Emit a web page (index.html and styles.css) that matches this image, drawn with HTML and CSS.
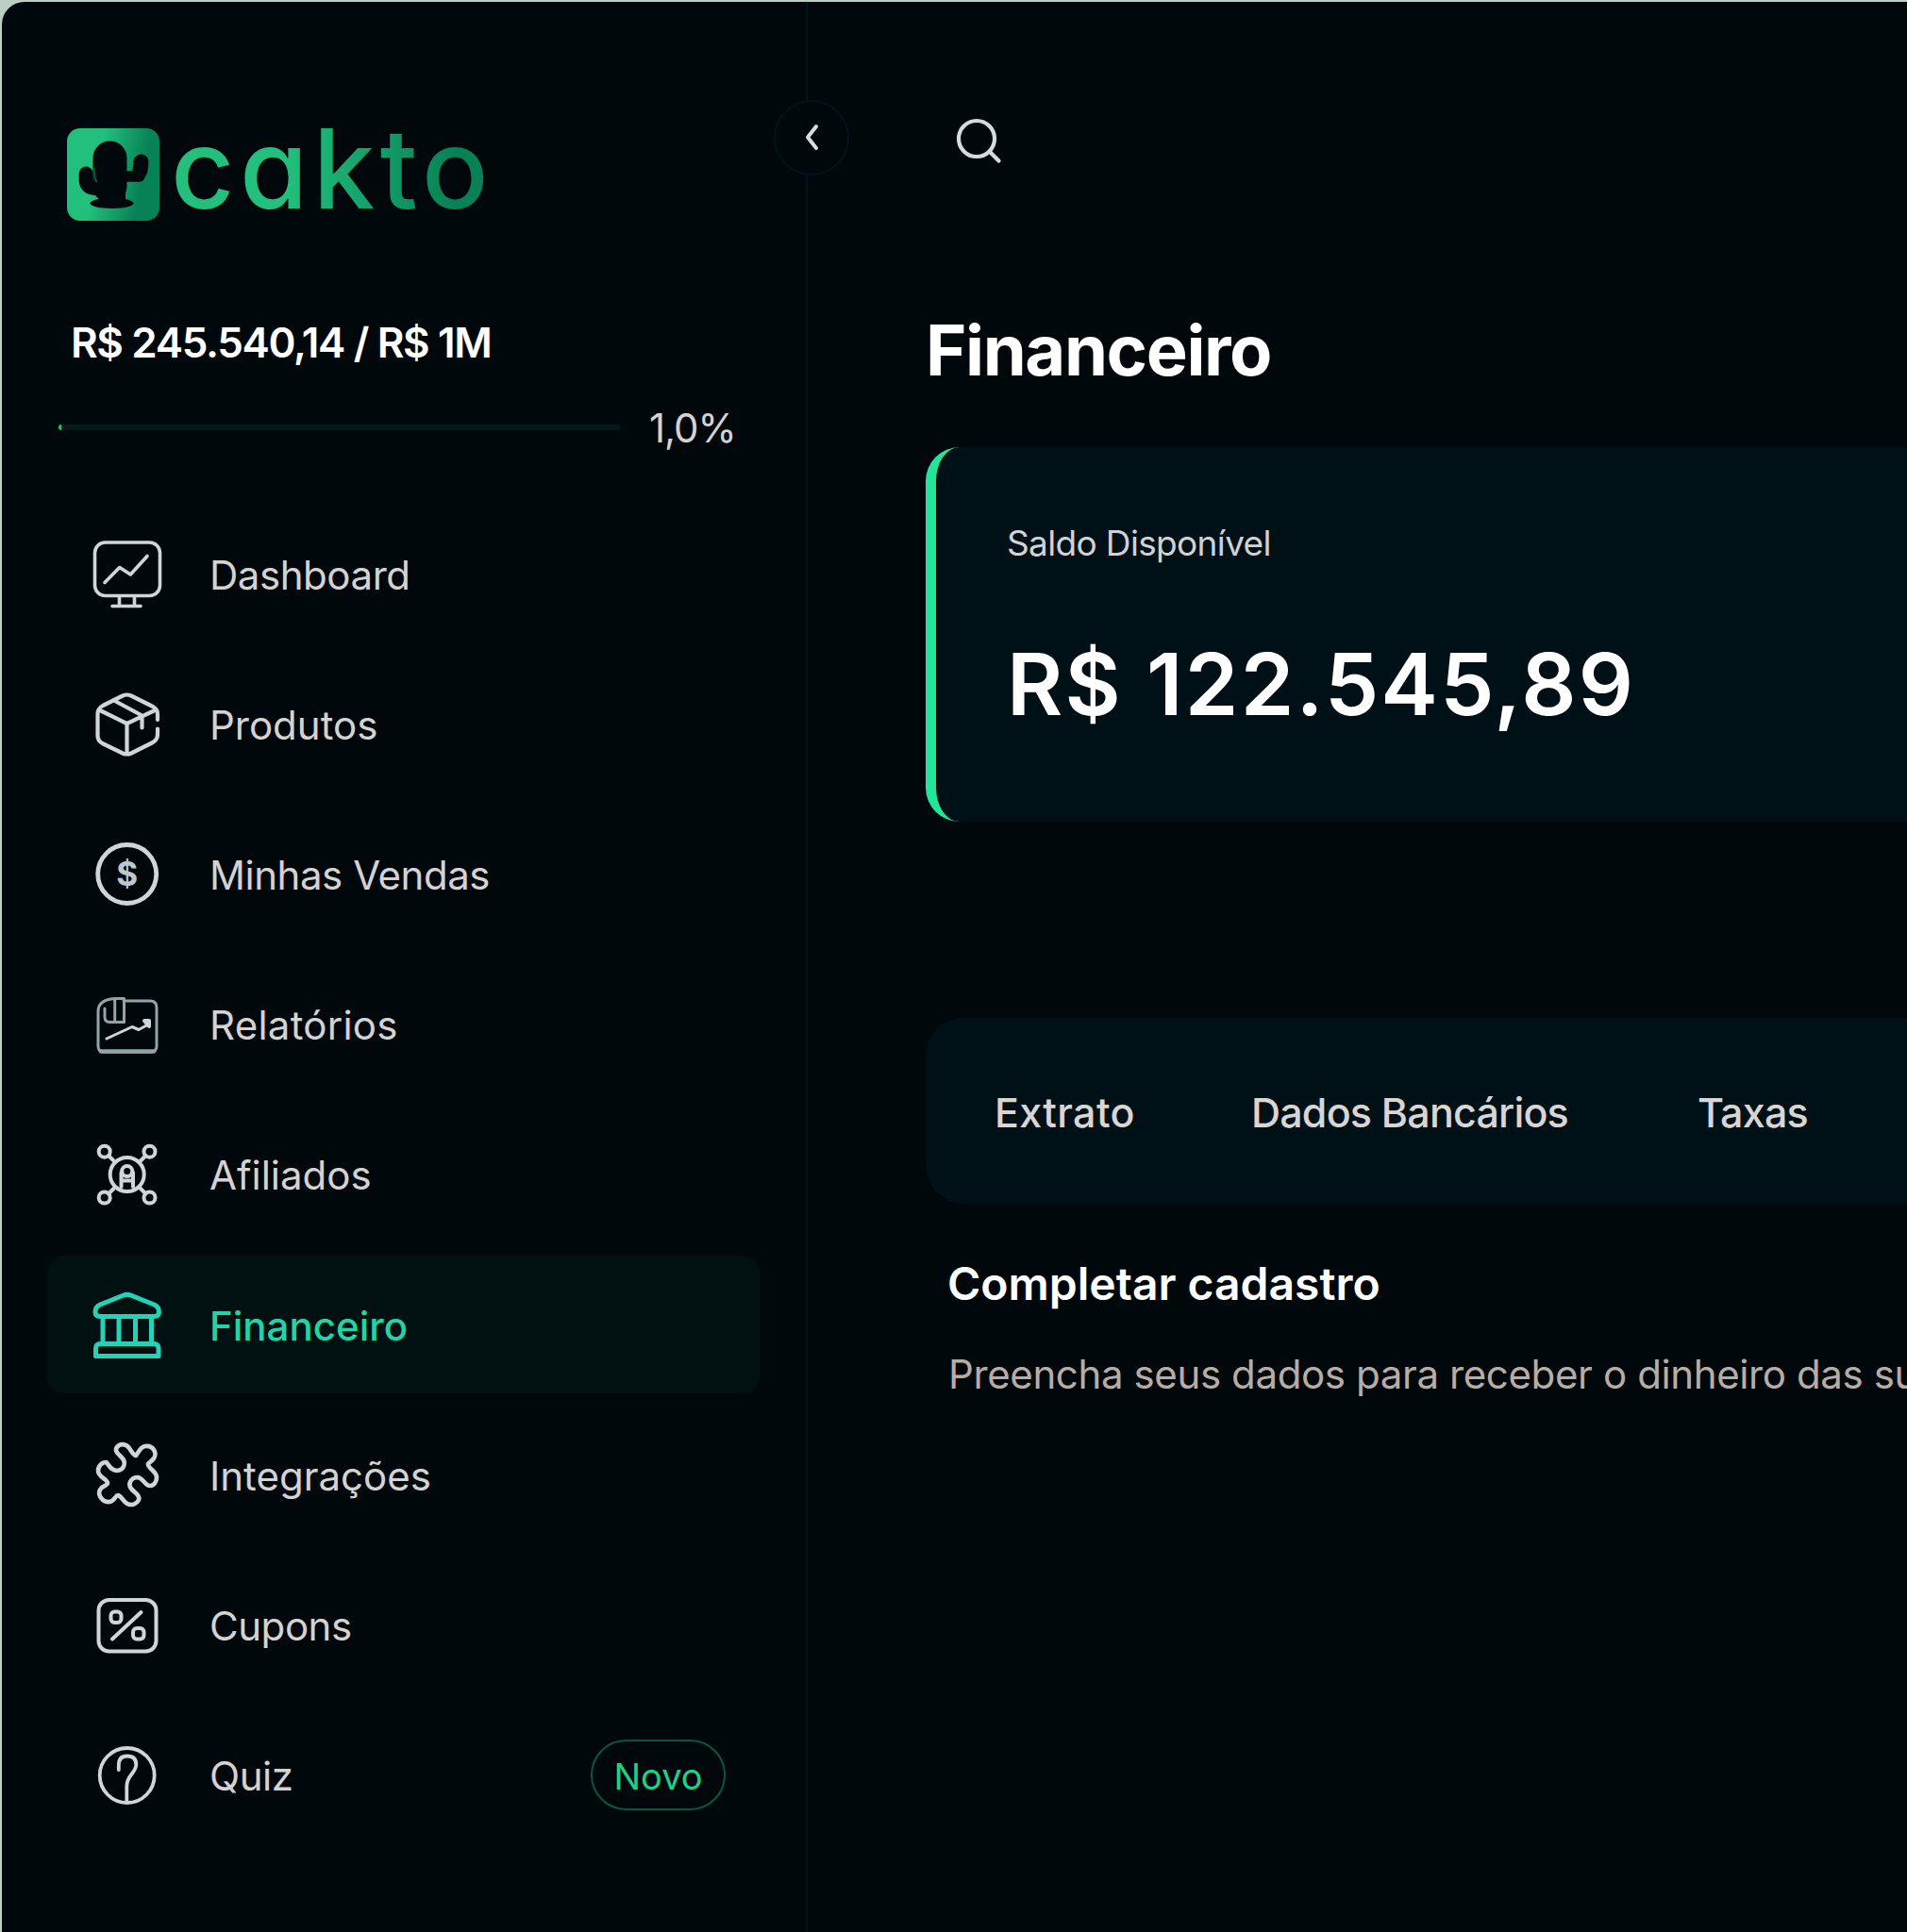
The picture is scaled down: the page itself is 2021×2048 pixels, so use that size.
FILE: index.html
```html
<!DOCTYPE html>
<html lang="pt-BR">
<head>
    <meta charset="utf-8">
    <title>Financeiro</title>
    <link rel="stylesheet" href="styles.css">
</head>
<body>
    <div class="app">
        <aside class="sidebar">
            <div class="logo">
                <svg class="logo-icon" viewBox="0 0 98 98">
                    <defs>
                        <linearGradient id="logoGrad" x1="0" y1="0.2" x2="1" y2="0.4">
                            <stop offset="0.35" stop-color="#22c07c"/>
                            <stop offset="0.85" stop-color="#078257"/>
                        </linearGradient>
                    </defs>
                    <rect width="98" height="98" rx="14" fill="url(#logoGrad)"/>
                    <g fill="#01080b">
                        <rect x="27.500" y="13.500" width="36" height="66" rx="18"/>
                        <path d="M30 60h32v16H35z"/>
                        <ellipse cx="47.500" cy="79.500" rx="23" ry="5.500"/>
                    </g>
                    <g fill="none" stroke="#01080b" stroke-linecap="round">
                        <path d="M20.200 48v7q0 9 12 8.500" stroke-width="15"/>
                        <path d="M78.500 35.500L77.500 45" stroke-width="16"/>
                        <path d="M77 51H62" stroke-width="11.500"/>
                    </g>
                    <path d="M28.500 42q0 10 3 15" fill="none" stroke="#0c5a40" stroke-width="2"/>
                </svg>
                <span class="logo-text">cakto</span>
            </div>

            <div class="goal">
                <div class="goal-value">R$ 245.540,14 / R$ 1M</div>
                <div class="goal-row">
                    <div class="goal-bar"><div class="goal-fill"></div></div>
                    <span class="goal-percent">1,0%</span>
                </div>
            </div>

            <nav class="menu">
                <a class="item">
                    <svg class="icon" viewBox="0 0 76 76" stroke-width="3.6">
                        <rect x="4.500" y="5" width="69" height="56.500" rx="11"/>
                        <path d="M15 47.500L30.700 31.500L42.300 39L60 19.500M30.500 62v10.500M46.500 62v10.500M23 72.500h30"/>
                    </svg>
                    <span class="label tight">Dashboard</span>
                </a>
                <a class="item">
                    <svg class="icon" viewBox="0 0 76 76" stroke-width="4.2">
                        <path d="M71 34v-6q0-5-5-8L43 8.500q-4.500-2-9 0L13 19q-5.500 3-5.500 9v23q0 5 5 8L34 69.500q4.500 2 9 0L65 58.500q6-3 6-9v-6"/>
                        <path d="M11 24.500L38.500 38L67 24.500M38.500 38v32M25.700 14L54.500 29.500v13"/>
                    </svg>
                    <span class="label">Produtos</span>
                </a>
                <a class="item">
                    <svg class="icon" viewBox="0 0 76 76" stroke-width="4.8">
                        <circle cx="38.700" cy="38.500" r="31"/>
                        <text class="coin" x="38.700" y="51">$</text>
                    </svg>
                    <span class="label tight">Minhas Vendas</span>
                </a>
                <a class="item">
                    <svg class="icon dim" viewBox="0 0 76 76" stroke-width="3">
                        <path d="M35 13h28q7 0 7 7v41q0 6-7 6H14q-6 0-6-6V24q0-12 17.500-13.500h10v25H20q-5 0-5-5.500v-9M25.700 11v24.500"/>
                        <path d="M11 66.500h56" stroke-width="4.500"/>
                        <path d="M17 53L44 40.500L51 43.500L62 37.500" stroke="#cfd6da"/>
                        <path d="M57 34h5v6z" fill="#cfd6da" stroke="#cfd6da" stroke-width="4"/>
                    </svg>
                    <span class="label wide">Relatórios</span>
                </a>
                <a class="item">
                    <svg class="icon" viewBox="0 0 76 76" stroke-width="4">
                        <circle cx="14.700" cy="13.700" r="6"/>
                        <circle cx="62.500" cy="13.700" r="6"/>
                        <circle cx="14.700" cy="62.500" r="6"/>
                        <circle cx="62.500" cy="62.500" r="6"/>
                        <circle cx="38.700" cy="38" r="18"/>
                        <circle cx="38.700" cy="34.500" r="5.500"/>
                        <path d="M19 18l7 7M58.500 18l-7 7M19 58.500l7-7M58.500 58.500l-7-7M32.500 36v15M45 36v15M32.500 44.500H45"/>
                    </svg>
                    <span class="label">Afiliados</span>
                </a>
                <a class="item active">
                    <svg class="icon" viewBox="0 0 76 76" stroke-width="5">
                        <path d="M10 29.500q-5 0-5-5q0-5 5-7.500L35 7q3.700-1.500 7.500 0L67.500 17q5 2.500 5 7.500q0 5-5 5z"/>
                        <path d="M13 30v28M30 30v28M47.500 30v28M64.500 30v28"/>
                        <path d="M5.500 71.500v-8q0-5 5-5h56.500q5 0 5 5v8z"/>
                    </svg>
                    <span class="label">Financeiro</span>
                </a>
                <a class="item">
                    <svg class="icon" viewBox="0 0 76 76" stroke-width="4.6">
                        <path d="M16.700 25C20 29 22 34 28 34C36 33 38 25 33 20C29 16 25 13 28 9C31 5 37 5 41 10C43 13 45 17 48 18C51 15 52 9 58 8C66 7 71 15 67 21C64 25 60 26 61 28C63 33 70 35 70 41C70 46 67 50 63 50C58 50 56 42 50 41C43 41 39 48 43 53C46 57 53 60 51 65C49 69 44 71 40 69.500C35 68 33 61 29 60C26 60 26 66 20 67C13 68 7 60 10 54C12 50 18 50 18 47C18 43 8 41 8 34C8 29 12 25 16.700 25Z"/>
                    </svg>
                    <span class="label">Integrações</span>
                </a>
                <a class="item">
                    <svg class="icon" viewBox="0 0 76 76" stroke-width="4">
                        <rect x="8.500" y="12" width="61" height="54.500" rx="11"/>
                        <rect x="21.500" y="24.500" width="11" height="11.500" rx="4"/>
                        <rect x="45" y="42" width="11.500" height="11.500" rx="4"/>
                        <path d="M23 53.500L53.500 25"/>
                    </svg>
                    <span class="label tight">Cupons</span>
                </a>
                <a class="item">
                    <svg class="icon" viewBox="0 0 76 76" stroke-width="3.8">
                        <circle cx="38.700" cy="38" r="29"/>
                        <path d="M29.800 32v-5q0-9.500 9-9.500q9.500 0 9.500 9q0 4-5 10.500q-5 6-5 13v15"/>
                    </svg>
                    <span class="label tight">Quiz</span>
                    <span class="badge">Novo</span>
                </a>
            </nav>

            <button class="collapse" type="button">
                <svg viewBox="0 0 76 76"><path d="M43 26L34 37.500L43 49"/></svg>
            </button>
        </aside>

        <main class="content">
            <svg class="search" viewBox="0 0 50 50">
                <circle cx="22" cy="22" r="19"/>
                <path d="M36 36l9.500 9.500"/>
            </svg>

            <h1 class="title">Financeiro</h1>

            <section class="balance">
                <div class="balance-label">Saldo Disponível</div>
                <div class="balance-value">R$ 122.545,89</div>
            </section>

            <div class="tabs">
                <span class="tab extrato">Extrato</span>
                <span class="tab dados">Dados Bancários</span>
                <span class="tab">Taxas</span>
            </div>

            <section class="register">
                <h2>Completar cadastro</h2>
                <p>Preencha seus dados para receber o dinheiro das suas vendas</p>
            </section>
        </main>
    </div>
</body>
</html>
```

FILE: styles.css
```css
* { box-sizing: border-box; }
body { margin: 0; height: 2048px; overflow: hidden; background: #bccdc8; font-family: Inter, "Liberation Sans", sans-serif; }
.app { display: flex; height: 2046px; margin: 2px 0 0 2px; background: #01080b; border-top-left-radius: 24px; overflow: hidden; }

/* sidebar */
.sidebar { position: relative; flex: none; width: 854px; padding: 134px 48px 0; border-right: 2px solid #02141a; }
.logo { display: flex; align-items: center; gap: 12px; height: 98px; margin-left: 21px; }
.logo-icon { flex: none; width: 98px; height: 98px; }
.logo-text { margin-top: -9px; padding-bottom: 4px; font-size: 117px; line-height: 98px; font-weight: 500; letter-spacing: 5.500px; font-feature-settings: "cv11"; background: linear-gradient(90deg, #22c07c 35%, #078257 88%); -webkit-background-clip: text; background-clip: text; color: transparent; }

.goal { margin: 97px 0 0 12px; }
.goal-value { margin-left: 13px; font-size: 44px; line-height: 64px; font-weight: 600; color: #fff; white-space: nowrap; letter-spacing: -1.350px; }
.goal-row { display: flex; align-items: center; margin-top: 29px; height: 58px; }
.goal-bar { width: 596px; height: 6px; background: #04191b; border-radius: 3px; overflow: hidden; }
.goal-fill { width: 3px; height: 6px; background: #1fbf7c; }
.goal-percent { margin-left: 30px; font-size: 42px; font-weight: 400; letter-spacing: -1px; color: #d8d2cf; }

.menu { display: flex; flex-direction: column; gap: 13px; margin-top: 53px; }
.item { display: flex; align-items: center; width: 755px; height: 146.200px; padding: 0 36px 0 46px; border-radius: 18px; font-size: 42px; color: #d5d2d1; white-space: nowrap; }
.item.active { background: #011011; color: #22d3a6; font-weight: 500; }
.icon { flex: none; width: 76px; height: 76px; margin-right: 50px; fill: none; stroke: #cfd6da; stroke-linecap: round; stroke-linejoin: round; }
.icon.dim { stroke: #93a3aa; }
.active .icon { stroke: #22d3b6; }
.coin { fill: #b9c9cf; stroke: none; font-size: 35px; font-weight: 700; text-anchor: middle; }
.label { padding-top: 2px; }
.label.tight { letter-spacing: -0.450px; }
.label.wide { letter-spacing: 0.250px; }
.badge { margin-left: auto; width: 143px; height: 75px; border: 2px solid #07573f; border-radius: 38px; color: #1fd08a; font-size: 38px; line-height: 74px; text-align: center; }

.collapse { position: absolute; top: 104px; left: 818px; width: 80px; height: 80px; padding: 0; border: 2px solid #02141a; border-radius: 50%; background: #01080b; }
.collapse svg { display: block; width: 76px; height: 76px; fill: none; stroke: #d9dcdd; stroke-width: 4; stroke-linecap: round; stroke-linejoin: round; }

/* content */
.content { flex: 1; min-width: 0; padding: 123px 0 0 125px; }
.search { display: block; width: 50px; height: 50px; margin-left: 32px; fill: none; stroke: #d5dadc; stroke-width: 4.200; stroke-linecap: round; }
.title { margin: 151px 0 0; font-size: 74px; line-height: 90px; font-weight: 700; color: #fff; letter-spacing: -1.400px; }
.balance { height: 397px; margin-top: 58px; padding: 77px 0 0 75px; border-left: 11px solid #24e49a; border-radius: 36px 0 0 36px; background: #001017; }
.balance-label { font-size: 37px; line-height: 50px; letter-spacing: -0.650px; color: #d0d3d5; }
.balance-value { margin-top: 73px; font-size: 91px; line-height: 102px; font-weight: 600; letter-spacing: 2.200px; color: #fff; }
.tabs { display: flex; align-items: center; height: 197px; margin-top: 208px; padding: 3px 0 0 73px; border-radius: 40px 0 0 40px; background: #001017; }
.tab { flex: none; font-size: 43px; font-weight: 500; letter-spacing: -0.800px; color: #d8d5d3; white-space: nowrap; }
.extrato { width: 272px; letter-spacing: 0.350px; }
.dados { width: 473px; }
.register { padding: 57px 0 0 23px; white-space: nowrap; overflow: hidden; }
.register h2 { margin: 0; font-size: 48px; line-height: 56px; font-weight: 600; color: #fff; }
.register p { margin: 40px 0 0 1px; font-size: 42px; line-height: 56px; font-weight: 400; letter-spacing: -0.380px; color: #b9aca5; }
```
